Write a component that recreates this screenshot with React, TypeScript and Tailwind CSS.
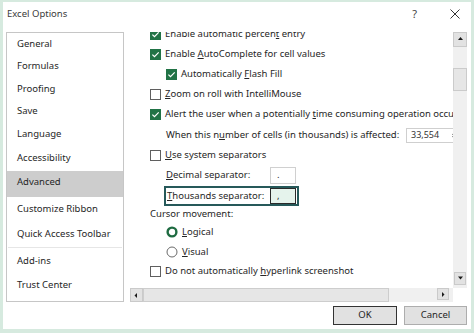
import React from "react";

const FONT = { fontFamily: '"Segoe UI", "Noto Sans", "Liberation Sans", sans-serif' };

function Check({ checked }: { checked: boolean }) {
  if (checked) {
    return (
      <svg width="11" height="11" viewBox="0 0 11 11" className="shrink-0">
        <rect x="0" y="0" width="11" height="11" fill="#217346" />
        <path d="M2.4 5.6 L4.5 7.7 L8.7 3.4" fill="none" stroke="#ffffff" strokeWidth="1.2" />
      </svg>
    );
  }
  return (
    <svg width="11" height="11" viewBox="0 0 11 11" className="shrink-0">
      <rect x="0.5" y="0.5" width="10" height="10" fill="#ffffff" stroke="#5f5f5f" strokeWidth="1" />
    </svg>
  );
}

function Radio({ checked }: { checked: boolean }) {
  return (
    <svg width="12" height="12" viewBox="0 0 12 12" className="shrink-0">
      {checked ? (
        <circle cx="6" cy="6" r="4.4" fill="#ffffff" stroke="#1e6b41" strokeWidth="2.4" />
      ) : (
        <circle cx="6" cy="6" r="5" fill="#ffffff" stroke="#6a6a6a" strokeWidth="1" />
      )}
    </svg>
  );
}

function Tri({ dir }: { dir: "up" | "down" | "left" | "right" }) {
  const d =
    dir === "up"
      ? "M1 4 L3.5 1 L6 4 Z"
      : dir === "down"
      ? "M1 1.5 L6 1.5 L3.5 4.5 Z"
      : dir === "left"
      ? "M4 1 L1.5 3.5 L4 6 Z"
      : "M2 1 L4.5 3.5 L2 6 Z";
  return (
    <svg width="7" height="7" viewBox="0 0 7 7">
      <path d={d} fill="#1a1a1a" />
    </svg>
  );
}

function SideItem({ label, h, selected, pb }: { label: string; h: string; selected?: boolean; pb?: string }) {
  return (
    <div
      className={`${h} ${pb ?? ""} flex items-center pl-[10px] whitespace-nowrap ${
        selected ? "bg-[#cdcdcd]" : ""
      }`}
    >
      {label}
    </div>
  );
}

export default function App() {
  return (
    <div
      className="w-[474px] h-[333px] bg-[#d6eadf] pt-[2px] pl-[3px] pr-[3px] pb-[4px] overflow-hidden text-[9.5px] text-[#262626]"
      style={FONT}
    >
      <div className="w-[468px] h-[327px] bg-white flex flex-col">
        {/* title bar */}
        <div className="h-[30px] flex items-center pl-[4px] pb-[6px] text-[9.5px] text-[#3a3a3a]">
          <span>Excel Options</span>
          <span className="ml-auto mr-[33px] text-[11px] text-[#444444]">?</span>
          <svg width="10" height="10" viewBox="0 0 10 10" className="mr-[11px]">
            <path d="M0.5 0.5 L9.5 9.5 M9.5 0.5 L0.5 9.5" stroke="#333333" strokeWidth="1" />
          </svg>
        </div>

        {/* main */}
        <div className="flex h-[270px]">
          <div className="ml-[3px] w-[118px] h-[270px] border border-[#c6c6c6] bg-white flex flex-col">
            <SideItem label="General" h="h-[22px]" />
            <SideItem label="Formulas" h="h-[23px]" />
            <SideItem label="Proofing" h="h-[22px]" />
            <SideItem label="Save" h="h-[23px]" />
            <SideItem label="Language" h="h-[23px]" />
            <SideItem label="Accessibility" h="h-[25px]" />
            <SideItem label="Advanced" h="h-[26px]" pb="pb-[3px]" selected />
            <SideItem label="Customize Ribbon" h="h-[25px]" />
            <SideItem label="Quick Access Toolbar" h="h-[25px]" />
            <div className="h-px bg-[#e6e6e6] mx-[1px]" />
            <SideItem label="Add-ins" h="h-[26px]" />
            <SideItem label="Trust Center" h="h-[22px]" />
          </div>

          {/* content panel */}
          <div className="ml-[6px] grid grid-cols-[323px_14px] grid-rows-[256px_14px]">
            <div className="overflow-hidden relative">
              <div className="-mt-[8px] flex flex-col whitespace-nowrap">
                <div className="h-[20px] flex items-center pl-[20px] gap-[4px]">
                  <Check checked />
                  <span className="shrink-0">
                    Enable automatic percen<u className="underline-offset-1">t</u> entry
                  </span>
                </div>
                <div className="h-[20px] flex items-center pl-[20px] gap-[4px]">
                  <Check checked />
                  <span className="shrink-0">
                    Enable <u className="underline-offset-1">A</u>utoComplete for cell values
                  </span>
                </div>
                <div className="h-[20px] flex items-center pl-[36px] gap-[4px]">
                  <Check checked />
                  <span className="shrink-0">
                    Automatically <u className="underline-offset-1">F</u>lash Fill
                  </span>
                </div>
                <div className="h-[20px] flex items-center pl-[20px] gap-[4px]">
                  <Check checked={false} />
                  <span className="shrink-0">
                    <u className="underline-offset-1">Z</u>oom on roll with IntelliMouse
                  </span>
                </div>
                <div className="h-[20px] flex items-center pl-[20px] gap-[4px]">
                  <Check checked />
                  <span className="shrink-0">
                    Alert the user when a potentially <u className="underline-offset-1">t</u>ime consuming operation occurs
                  </span>
                </div>
                <div className="h-[22px] flex items-center pl-[36px]">
                  <span className="w-[240px] shrink-0">
                    When this n<u className="underline-offset-1">u</u>mber of cells (in thousands) is affected:
                  </span>
                  <div className="w-[60px] h-[15px] border border-[#cfcfcf] bg-white flex items-center pl-[4px] shrink-0">
                    <span className="text-[9px] text-[#333333]">33,554</span>
                    <div className="ml-[13px] flex flex-col gap-[1px]">
                      <svg width="4" height="3" viewBox="0 0 4 3">
                        <path d="M0 3 L2 0 L4 3 Z" fill="#666666" />
                      </svg>
                      <svg width="4" height="3" viewBox="0 0 4 3">
                        <path d="M0 0 L4 0 L2 3 Z" fill="#666666" />
                      </svg>
                    </div>
                  </div>
                </div>
                <div className="h-[19px] flex items-center pl-[20px] gap-[4px]">
                  <Check checked={false} />
                  <span className="shrink-0">
                    <u className="underline-offset-1">U</u>se system separators
                  </span>
                </div>
                <div className="h-[21px] flex items-center pl-[36px]">
                  <span className="w-[104px] shrink-0">
                    <u className="underline-offset-1">D</u>ecimal separator:
                  </span>
                  <div className="w-[26px] h-[17px] shrink-0 border border-[#d0d0d0] bg-white flex items-center pl-[6px]">
                    .
                  </div>
                </div>
                <div className="h-[20px] flex items-center pl-[34px]">
                  <div className="w-[135px] h-[20px] shrink-0 border-2 border-[#26595a] flex items-center pl-[1px]">
                    <span className="w-[103px] shrink-0">
                      <u className="underline-offset-1">T</u>housands separator:
                    </span>
                    <div className="w-[26px] h-[16px] shrink-0 border border-[#2a2a2a] bg-[#e5f3ec] flex items-center pl-[6px]">
                      ,
                    </div>
                  </div>
                </div>
                <div className="h-[16px] flex items-center pl-[20px]">Cursor movement:</div>
                <div className="h-[20px] flex items-center pl-[36px] gap-[4px]">
                  <Radio checked />
                  <span className="shrink-0">
                    <u className="underline-offset-1">L</u>ogical
                  </span>
                </div>
                <div className="h-[20px] flex items-center pl-[36px] gap-[4px]">
                  <Radio checked={false} />
                  <span className="shrink-0">
                    <u className="underline-offset-1">V</u>isual
                  </span>
                </div>
                <div className="h-[19px] flex items-center pl-[20px] gap-[4px]">
                  <Check checked={false} />
                  <span className="shrink-0">
                    Do not automatically <u className="underline-offset-1">h</u>yperlink screenshot
                  </span>
                </div>
              </div>
            </div>

            {/* vertical scrollbar */}
            <div className="bg-[#f0f0f0] flex flex-col items-center">
              <div className="w-[14px] h-[15px] bg-[#e2e2e2] border border-[#cacaca] flex items-center justify-center">
                <Tri dir="up" />
              </div>
              <div className="mt-[21px] w-[14px] h-[23px] bg-[#e6e6e6] border border-[#cbcbcb]" />
              <div className="mt-auto mb-[3px] w-[12px] h-[13px] bg-[#e2e2e2] border border-[#cacaca] flex items-center justify-center">
                <Tri dir="down" />
              </div>
            </div>

            {/* horizontal scrollbar */}
            <div className="flex bg-[#f0f0f0]">
              <div className="w-[13px] h-[14px] bg-[#e2e2e2] border border-[#cacaca] flex items-center justify-center">
                <Tri dir="left" />
              </div>
              <div className="w-[246px] h-[14px] bg-[#e6e6e6] border border-[#cdcdcd]" />
              <div className="w-[48px]" />
              <div className="w-[12px] h-[12px] bg-[#e2e2e2] border border-[#cacaca] flex items-center justify-center">
                <Tri dir="right" />
              </div>
            </div>
            <div className="bg-white" />
          </div>
        </div>

        {/* buttons */}
        <div className="flex justify-end mt-[4px] pr-[4px] gap-[7px]">
          <div className="w-[64px] h-[19px] bg-[#e1e1e1] border border-[#333333] flex items-center justify-center">
            OK
          </div>
          <div className="w-[63px] h-[19px] bg-[#e1e1e1] border border-[#adadad] flex items-center justify-center">
            Cancel
          </div>
        </div>
      </div>
    </div>
  );
}
